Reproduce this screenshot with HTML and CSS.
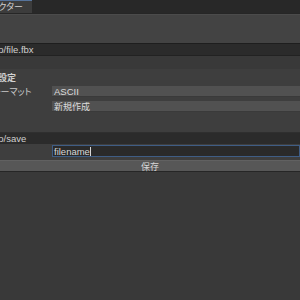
FILE: index.html
```html
<!DOCTYPE html>
<html lang="ja">
<head>
<meta charset="utf-8">
<link rel="stylesheet" href="styles.css">
</head>
<body>
<div class="app">
  <div class="tabbar">
    <div class="tab"><span class="tab-label ja">インスペクター</span></div>
  </div>
  <div class="header-panel"></div>
  <div class="pathbar"><span class="path">Assets/Demo/file.fbx</span></div>
  <div class="spacer"></div>
  <div class="section">
    <div class="section-title"><span class="title-text ja">エクスポート設定</span></div>
    <div class="row">
      <div class="label"><span class="label-text ja">フォーマット</span></div>
      <div class="field">ASCII</div>
    </div>
    <div class="row">
      <div class="label"></div>
      <div class="field"><span class="ja">新規作成</span></div>
    </div>
  </div>
  <div class="pathbar out"><span class="path">Assets/Demo/save</span></div>
  <div class="row input-row">
    <div class="label"></div>
    <div class="input">filename<span class="caret"></span></div>
  </div>
  <div class="button"><span class="ja">保存</span></div>
  <div class="rest"></div>
</div>
</body>
</html>
```
FILE: styles.css
```css
* { box-sizing: border-box; }
html, body { margin: 0; padding: 0; }
body {
  background: #383838;
  font-family: "Liberation Sans Narrow", "Liberation Sans", "Noto Sans CJK JP", sans-serif;
  font-size: 9.5px;
  color: #d0d0d0;
  width: 300px;
  height: 300px;
  overflow: hidden;
}
.ja {
  font-family: "Noto Sans CJK JP", sans-serif;
  font-size: 9px;
  font-feature-settings: "palt";
}
.app { width: 300px; height: 300px; display: flex; flex-direction: column; }
.tabbar {
  height: 13px;
  background: #282828;
  display: flex;
}
.tab {
  width: 32px;
  background: #3c3c3c;
  border-top: 1px solid #56739b;
  overflow: hidden;
  white-space: nowrap;
  line-height: 12px;
}
.tab-label { display: inline-block; margin-left: -34px; color: #cfcfcf; }
.header-panel {
  height: 31px;
  background: #434343;
  border-top: 1px solid #262626;
  border-bottom: 1px solid #1e1e1e;
  box-shadow: inset 0 1px 0 #4b4b4b;
}
.pathbar {
  height: 12px;
  background: #2b2b2b;
  border-bottom: 1px solid #222;
  overflow: hidden;
  white-space: nowrap;
  line-height: 12px;
}
.path { display: inline-block; margin-left: -53px; }
.spacer { height: 13px; background: #393939; }
.section { background: #3e3e3e; padding: 2px 0 18px; }
.section-title {
  height: 13px;
  line-height: 13px;
  font-weight: bold;
  overflow: hidden;
  white-space: nowrap;
}
.title-text { display: inline-block; margin-left: -52px; font-weight: bold; }
.row { display: flex; height: 13px; margin-top: 2px; }
.label {
  width: 52px;
  overflow: hidden;
  white-space: nowrap;
  line-height: 11px;
}
.label-text { display: inline-block; margin-left: -14px; color: #c8c8c8; }
.field {
  flex: 1;
  height: 11px;
  background: #515151;
  border-bottom: 1px solid #3a3a3a;
  line-height: 11px;
  padding-left: 2px;
  color: #dcdcdc;
  white-space: nowrap;
}
.pathbar.out { height: 12px; border-top: 1px solid #2f2f2f; border-bottom: none; line-height: 11px; }
.input-row { background: #3e3e3e; height: 16px; margin: 0; padding-top: 1px; }
.input {
  flex: 1;
  height: 12px;
  background: #2a2a2a;
  border: 1px solid #3f5d85;
  line-height: 11px;
  padding-left: 1px;
  color: #d8d8d8;
}
.caret {
  display: inline-block;
  width: 1px;
  height: 9px;
  background: #d8d8d8;
  vertical-align: -1px;
}
.button {
  height: 12px;
  background: #575757;
  border-top: 1px solid #616161;
  border-bottom: 1px solid #262626;
  text-align: center;
  line-height: 11px;
  color: #d6d6d6;
}
.rest { flex: 1; background: #393939; }
```
